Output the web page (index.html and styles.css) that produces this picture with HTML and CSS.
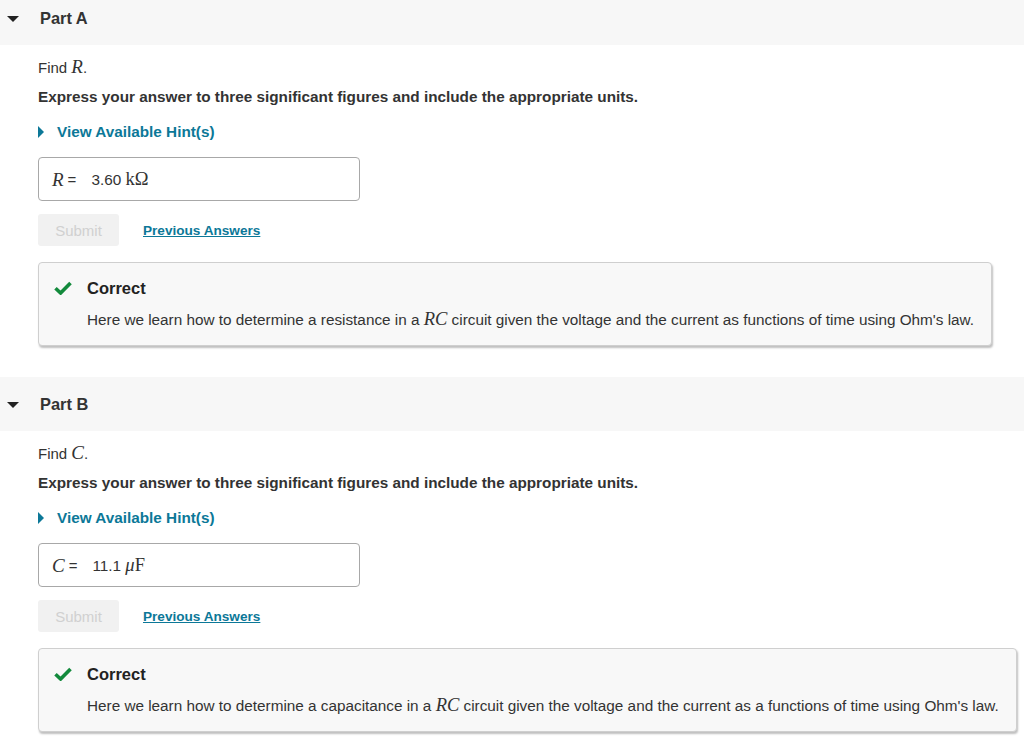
FILE: index.html
```html
<!DOCTYPE html>
<html lang="en">
<head>
<meta charset="utf-8">
<title>Parts</title>
<link rel="stylesheet" href="styles.css">
</head>
<body>
<div class="page">
  <section class="part">
    <div class="part-header">
      <span class="caret-down"></span>
      <h2 class="part-title">Part A</h2>
    </div>
    <div class="part-body">
      <p class="prompt">Find <span class="m">R</span>.</p>
      <p class="instr">Express your answer to three significant figures and include the appropriate units.</p>
      <div class="hint"><span class="caret-right"></span><a class="hint-link">View Available Hint(s)</a></div>
      <div class="answer"><span class="m">R</span><span class="eq">=</span><span class="val">3.60 <span class="unit">kΩ</span></span></div>
      <div class="actions"><button class="submit" disabled>Submit</button><a class="prev">Previous Answers</a></div>
      <div class="feedback">
        <div class="fb-head">
          <svg class="check" width="18" height="14" viewBox="0 0 18 14"><path d="M1.5 7.2 L6.6 12 L16.5 2" fill="none" stroke="#138a3c" stroke-width="3.6"/></svg>
          <span class="fb-title">Correct</span>
        </div>
        <p class="fb-text">Here we learn how to determine a resistance in a <span class="m">RC</span> circuit given the voltage and the current as functions of time using Ohm's law.</p>
      </div>
    </div>
  </section>
  <section class="part">
    <div class="part-header">
      <span class="caret-down"></span>
      <h2 class="part-title">Part B</h2>
    </div>
    <div class="part-body">
      <p class="prompt">Find <span class="m">C</span>.</p>
      <p class="instr">Express your answer to three significant figures and include the appropriate units.</p>
      <div class="hint"><span class="caret-right"></span><a class="hint-link">View Available Hint(s)</a></div>
      <div class="answer"><span class="m">C</span><span class="eq">=</span><span class="val">11.1 <span class="unit"><span class="m">μ</span>F</span></span></div>
      <div class="actions"><button class="submit" disabled>Submit</button><a class="prev">Previous Answers</a></div>
      <div class="feedback">
        <div class="fb-head">
          <svg class="check" width="18" height="14" viewBox="0 0 18 14"><path d="M1.5 7.2 L6.6 12 L16.5 2" fill="none" stroke="#138a3c" stroke-width="3.6"/></svg>
          <span class="fb-title">Correct</span>
        </div>
        <p class="fb-text">Here we learn how to determine a capacitance in a <span class="m">RC</span> circuit given the voltage and the current as a functions of time using Ohm's law.</p>
      </div>
    </div>
  </section>
</div>
</body>
</html>
```
FILE: styles.css
```css
html, body {
  margin: 0;
  padding: 0;
  background: #ffffff;
}
body {
  font-family: "Liberation Sans", Arial, sans-serif;
  font-size: 15px;
  color: #333333;
}
.page {
  margin-top: -9px;
}
.part {
  margin-bottom: 31px;
}
.part-header {
  height: 54px;
  background: #f7f7f7;
  display: flex;
  align-items: center;
  padding-left: 7px;
}
.caret-down {
  width: 0;
  height: 0;
  border-left: 6px solid transparent;
  border-right: 6px solid transparent;
  border-top: 6px solid #222222;
  margin-right: 21px;
  margin-top: 1px;
}
.part-title {
  margin: 0;
  font-size: 16.4px;
  font-weight: bold;
  color: #333333;
}
.part-body {
  padding: 12px 0 0 38px;
}
.m {
  font-family: "Liberation Serif", "Times New Roman", serif;
  font-style: italic;
  font-size: 19px;
  line-height: 1;
}
.prompt {
  margin: 0;
  height: 20px;
  line-height: 20px;
  font-size: 15px;
}
.instr {
  margin: 10px 0 0;
  height: 20px;
  line-height: 20px;
  font-weight: bold;
  font-size: 15.3px;
}
.hint {
  margin-top: 15px;
  height: 20px;
  display: flex;
  align-items: center;
}
.caret-right {
  width: 0;
  height: 0;
  border-top: 6px solid transparent;
  border-bottom: 6px solid transparent;
  border-left: 6px solid #0c7898;
  margin-right: 13px;
}
.hint-link {
  color: #0c7898;
  font-weight: bold;
  font-size: 15.3px;
}
.answer {
  margin-top: 15px;
  width: 322px;
  height: 44px;
  box-sizing: border-box;
  border: 1px solid #a8a8a8;
  border-radius: 4px;
  display: flex;
  align-items: center;
  padding-left: 13px;
}
.answer .m {
  font-size: 19px;
}
.eq {
  margin-left: 4px;
  font-size: 15px;
}
.val {
  margin-left: 15px;
  font-size: 15.3px;
}
.unit {
  font-family: "Liberation Serif", "Times New Roman", serif;
  font-size: 18.5px;
  line-height: 1;
}
.unit .m {
  font-size: 18.5px;
}
.actions {
  margin-top: 13px;
  display: flex;
  align-items: center;
}
.submit {
  width: 81px;
  height: 32px;
  border: none;
  border-radius: 3px;
  background: #f1f1f1;
  color: #d0d0d0;
  font-family: "Liberation Sans", Arial, sans-serif;
  font-size: 15px;
  padding: 0;
}
.prev {
  margin-left: 24px;
  color: #0c7898;
  font-weight: bold;
  font-size: 13.6px;
  text-decoration: underline;
}
.feedback {
  display: inline-block;
  margin-top: 16px;
  box-sizing: border-box;
  height: 84px;
  background: #f8f8f8;
  border: 1px solid #cfcfcf;
  border-radius: 4px;
  box-shadow: 1px 2px 2px rgba(0, 0, 0, 0.25);
  padding: 15px 17px 0 15px;
  vertical-align: top;
}
.fb-head {
  display: flex;
  align-items: center;
  height: 20px;
}
.check {
  margin-right: 15px;
}
.fb-title {
  font-weight: bold;
  font-size: 16.5px;
  color: #222222;
}
.fb-text {
  margin: 12px 0 0 33px;
  height: 20px;
  line-height: 20px;
  font-size: 15.3px;
  color: #333333;
}
.fb-text .m {
  font-size: 18.5px;
}
```
